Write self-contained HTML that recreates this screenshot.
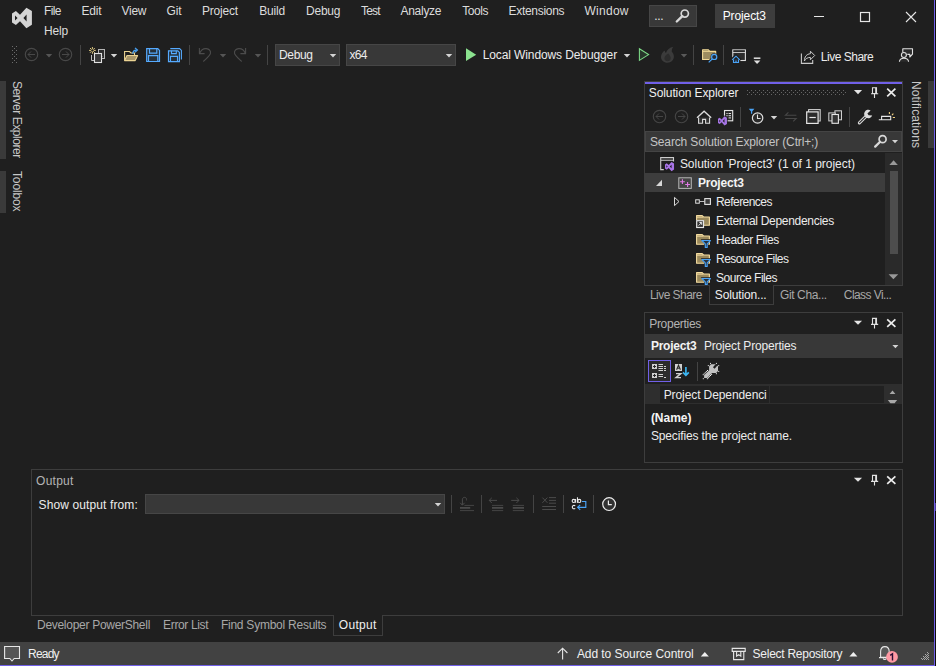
<!DOCTYPE html>
<html><head><meta charset="utf-8"><title>Project3</title>
<style>
html,body{margin:0;padding:0;}
body{width:936px;height:666px;background:#1f1f1f;position:relative;overflow:hidden;font-family:"Liberation Sans", sans-serif;font-size:12px;color:#ececec;}
.r{position:absolute;box-sizing:border-box;}
.t{position:absolute;white-space:pre;line-height:14px;height:14px;}
.v{position:absolute;white-space:pre;line-height:14px;height:14px;transform-origin:0 0;transform:rotate(90deg);}
svg{position:absolute;overflow:visible;}
</style></head><body>
<div class="r" style="left:934px;top:0px;width:1px;height:666px;background:#7160e8;"></div>
<div class="r" style="left:935px;top:0px;width:1px;height:666px;background:#0c0c0c;"></div>
<div class="r" style="left:935px;top:503px;width:1px;height:8px;background:#4b3d94;"></div>
<div class="r" style="left:0px;top:642px;width:934px;height:23px;background:#424242;"></div>
<div class="r" style="left:0px;top:665px;width:935px;height:1px;background:#7160e8;"></div>
<div class="r" style="left:0px;top:81px;width:6px;height:78px;background:#3a3a3a;"></div>
<div class="r" style="left:0px;top:171px;width:6px;height:42px;background:#3a3a3a;"></div>
<div class="r" style="left:928px;top:81px;width:6px;height:67px;background:#3a3a3a;"></div>
<div class="r" style="left:649px;top:5px;width:48px;height:22px;background:#383838;border:1px solid #464646;"></div>
<div class="r" style="left:715px;top:4px;width:60px;height:24px;background:#3d3d3d;"></div>
<div class="r" style="left:275px;top:44px;width:65px;height:22px;background:#383838;border:1px solid #464646;"></div>
<div class="r" style="left:346px;top:44px;width:110px;height:22px;background:#383838;border:1px solid #464646;"></div>
<div class="r" style="left:80px;top:45px;width:1px;height:20px;background:#444;"></div>
<div class="r" style="left:189px;top:45px;width:1px;height:20px;background:#444;"></div>
<div class="r" style="left:267px;top:45px;width:1px;height:20px;background:#444;"></div>
<div class="r" style="left:693px;top:45px;width:1px;height:20px;background:#444;"></div>
<div class="r" style="left:723px;top:45px;width:1px;height:20px;background:#444;"></div>
<div class="r" style="left:644px;top:81px;width:259px;height:205px;background:#1f1f1f;border:1px solid #3d3d3d;"></div>
<div class="r" style="left:645px;top:82px;width:257px;height:2px;background:#7160e8;"></div>
<div class="r" style="left:645px;top:131px;width:257px;height:21px;background:#383838;border:1px solid #444;"></div>
<div class="r" style="left:645px;top:173px;width:240px;height:19px;background:#3d3d3d;"></div>
<div class="r" style="left:885px;top:153px;width:17px;height:132px;background:#2a2a2a;"></div>
<div class="r" style="left:890px;top:171px;width:8px;height:83px;background:#4d4d4d;"></div>
<div class="r" style="left:740px;top:107px;width:1px;height:20px;background:#444;"></div>
<div class="r" style="left:849px;top:107px;width:1px;height:20px;background:#444;"></div>
<div class="r" style="left:709px;top:285px;width:65px;height:20px;background:#1f1f1f;border:1px solid #3d3d3d;border-top:none;"></div>
<div class="r" style="left:644px;top:312px;width:259px;height:151px;background:#1f1f1f;border:1px solid #3d3d3d;"></div>
<div class="r" style="left:645px;top:334px;width:257px;height:24px;background:#383838;"></div>
<div class="r" style="left:648px;top:360px;width:23px;height:22px;background:#2b2b2b;border:1px solid #7160e8;"></div>
<div class="r" style="left:697px;top:362px;width:1px;height:19px;background:#444;"></div>
<div class="r" style="left:645px;top:384px;width:257px;height:20px;background:#2e2e2e;"></div>
<div class="r" style="left:660px;top:386px;width:109px;height:17px;background:#212121;"></div>
<div class="r" style="left:770px;top:386px;width:114px;height:17px;background:#212121;"></div>
<div class="r" style="left:31px;top:469px;width:872px;height:147px;background:#1f1f1f;border:1px solid #3d3d3d;"></div>
<div class="r" style="left:145px;top:494px;width:300px;height:20px;background:#383838;border:1px solid #464646;"></div>
<div class="r" style="left:451px;top:495px;width:1px;height:18px;background:#444;"></div>
<div class="r" style="left:481px;top:495px;width:1px;height:18px;background:#444;"></div>
<div class="r" style="left:533px;top:495px;width:1px;height:18px;background:#444;"></div>
<div class="r" style="left:563px;top:495px;width:1px;height:18px;background:#444;"></div>
<div class="r" style="left:593px;top:495px;width:1px;height:18px;background:#444;"></div>
<div class="r" style="left:333px;top:615px;width:50px;height:21px;background:#1f1f1f;border:1px solid #3d3d3d;border-top:none;"></div>
<svg width="936" height="666" viewBox="0 0 936 666" style="left:0;top:0" fill="none" stroke-linecap="butt"><defs><pattern id="grip" x="12" y="46" width="4" height="4" patternUnits="userSpaceOnUse"><rect x="0" y="0" width="1" height="1" fill="#6c6c6c"/><rect x="2" y="2" width="1" height="1" fill="#6c6c6c"/></pattern><pattern id="dots" x="747" y="90" width="4" height="4" patternUnits="userSpaceOnUse"><rect x="0" y="0" width="1" height="1" fill="#666"/><rect x="2" y="2" width="1" height="1" fill="#666"/></pattern></defs><path fill="#d4d4d4" fill-rule="evenodd" d="M26.4,7.8 L31.9,11.1 L31.9,24.7 L26.4,28.2 L20,21.2 L15.9,24.9 L12,22.5 L12,13.5 L15.9,11 L20,14.8 Z M15,15.6 L17.6,18 L15,20.4 Z M26.6,14.6 L26.6,21.4 L23.4,18 Z"/><circle cx="684.8" cy="13.6" r="3.6" stroke="#d8d8d8" stroke-width="1.7"/><path d="M682.3,16.2 L676.8,21.5" stroke="#d8d8d8" stroke-width="2.4" stroke-linecap="round"/><path d="M814,16.5 H824" stroke="#e6e6e6" stroke-width="1"/><rect x="860.5" y="12.5" width="9" height="9" stroke="#e6e6e6" stroke-width="1.2"/><path d="M906,12 L916,22 M916,12 L906,22" stroke="#e6e6e6" stroke-width="1.1"/><rect x="12" y="46" width="6" height="18" fill="url(#grip)"/><circle cx="31.5" cy="54.5" r="6.2" stroke="#484848" stroke-width="1.15"/><path d="M35.0,54.5 H28.0 M31.0,51.5 L28.0,54.5 L31.0,57.5" stroke="#484848" stroke-width="1"/><circle cx="65.5" cy="54.5" r="6.2" stroke="#484848" stroke-width="1.15"/><path d="M62.0,54.5 H69.0 M66.0,51.5 L69.0,54.5 L66.0,57.5" stroke="#484848" stroke-width="1"/><path d="M45.8,54 H52.2 L49,57.4 Z" fill="#555"/><path d="M110.8,54 H117.2 L114,57.4 Z" fill="#d4d4d4"/><path d="M219.8,54 H226.2 L223,57.4 Z" fill="#555"/><path d="M254.8,54 H261.2 L258,57.4 Z" fill="#555"/><path d="M329.8,54 H336.2 L333,57.4 Z" fill="#d4d4d4"/><path d="M445.8,54 H452.2 L449,57.4 Z" fill="#d4d4d4"/><path d="M623.8,54 H630.2 L627,57.4 Z" fill="#d4d4d4"/><path d="M680.8,54 H687.2 L684,57.4 Z" fill="#5a5a5a"/><path d="M91.5,55 V60.5 H94" stroke="#bdbdbd" stroke-width="1"/><rect x="98.5" y="49.5" width="6" height="9" fill="#2b2b2b" stroke="#b4b4b4" stroke-width="1"/><path d="M100.5,53 V56.5 H103" stroke="#555" stroke-width="1"/><rect x="94.5" y="53.5" width="7" height="9" fill="#3a3a3a" stroke="#e0e0e0" stroke-width="1.1"/><path d="M92.4,47 V53.8 M89,50.4 H95.8 M90,48 L94.8,52.8 M94.8,48 L90,52.8" stroke="#f0d88a" stroke-width="0.9"/><circle cx="92.4" cy="50.4" r="1.2" fill="#1f1f1f"/><path d="M124.6,60.5 V51.5 H129.5 L131,53 H134.5 V55.5" stroke="#ecd493" stroke-width="1.1"/><path d="M124.6,60.6 L127,55.5 H137.6 L135.2,60.6 Z" fill="#a8966a" stroke="#ecd493" stroke-width="1.1" stroke-linejoin="round"/><path d="M132.8,53.8 C132.8,51.3 134.2,50.1 136.6,50.1" stroke="#4aa3f5" stroke-width="1.25"/><path d="M135,47.9 L137.4,50.1 L135,52.3" stroke="#4aa3f5" stroke-width="1.25"/><path d="M146.7,48.7 H157.8 L159.5,50.4 V61.5 H146.7 Z" fill="#26303a" stroke="#55aaff" stroke-width="1.2"/><path d="M149.5,48.7 V53.2 H156.8 V48.7 M148.5,61.5 V55.7 H157.8 V61.5" stroke="#55aaff" stroke-width="1.2"/><path d="M170.3,48.6 H179.6 L181.4,50.4 V59.5" stroke="#55aaff" stroke-width="1.1"/><path d="M168.5,50.8 H177.8 L179.4,52.4 V61.6 H168.5 Z" fill="#26303a" stroke="#55aaff" stroke-width="1.2"/><path d="M171.5,50.8 V53.6 H176.3 V50.8 M170.5,61.6 V56.4 H177.5 V61.6" stroke="#55aaff" stroke-width="1.1"/><path d="M199.4,48 V53.6 H204.6 M199.6,53.4 C201,50 203.5,48.4 206.3,48.6 C209.2,48.8 211,51 210.4,53.6 C210,55.2 208.5,56.5 203.3,61.5" stroke="#4c4c4c" stroke-width="1.1"/><path d="M245.6,48 V53.6 H240.4 M245.4,53.4 C244,50 241.5,48.4 238.7,48.6 C235.8,48.8 234,51 234.6,53.6 C235,55.2 236.5,56.5 241.7,61.5" stroke="#4c4c4c" stroke-width="1.1"/><path d="M466,48.3 L476.2,54.7 L466,61.1 Z" fill="#8be28f"/><path d="M639.4,48.8 L648.6,54.6 L639.4,60.4 Z" fill="#27372a" stroke="#7edb88" stroke-width="1.05"/><path d="M673.4,46.8 C669.6,47.4 666.8,49.8 666,53 C665.2,52.4 664.8,51.4 664.8,50.4 C662.4,52 661,54.4 661,57 C661,60.2 663.8,62.8 667.4,62.8 C671,62.8 673.9,60.2 673.9,56.6 C673.9,54.6 673,53 671.8,51.8 C671.6,50 672.2,48.2 673.4,46.8 Z" fill="#3b3b3b"/><path d="M668.6,53.6 C666.2,54.6 664.4,56.2 664.4,58.2 C664.4,59.9 665.8,61.2 667.5,61.2 C669.3,61.2 670.7,59.9 670.7,58.2 C670.7,56.8 669.6,55.6 668.6,53.6 Z" fill="#2c2c2c"/><path d="M702.6,59.5 V49.7 H708.2 L709.8,51.4 H715.7 V59.5 Z" fill="#9c8c60" stroke="#f2da98" stroke-width="1.1" stroke-linejoin="round"/><path d="M702.6,51.4 H709.6" stroke="#f2da98" stroke-width="0.9"/><circle cx="714.2" cy="56.9" r="3.6" fill="#1f1f1f"/><path d="M712,59.2 L708.6,62.5" stroke="#1f1f1f" stroke-width="3"/><circle cx="714.2" cy="56.9" r="2.6" fill="#252c36" stroke="#4aa3f5" stroke-width="1.2"/><path d="M712.3,58.9 L708.7,62.4" stroke="#4aa3f5" stroke-width="1.3"/><rect x="732.8" y="49.9" width="12.6" height="10.6" fill="#2d2d2d" stroke="#dcdcdc" stroke-width="1.1"/><path d="M732.8,52.3 H745.4" stroke="#dcdcdc" stroke-width="1.1"/><rect x="733.4" y="50.4" width="11.4" height="1.4" fill="#1f1f1f"/><path d="M731.4,60.2 L736,55.8 L740.6,60.2 M733.3,59 V62.8 H738.7 V59" fill="#1f1f1f" stroke="#1f1f1f" stroke-width="3"/><path d="M733.5,59.6 V62.5 H738.5 V59.6" fill="#252c36" stroke="#4aa3f5" stroke-width="1.1"/><path d="M732.2,59.8 L736,56.2 L739.8,59.8" stroke="#4aa3f5" stroke-width="1.15"/><rect x="735.4" y="60.6" width="1.2" height="1.6" fill="#4aa3f5"/><path d="M753.8,58.2 H760.4" stroke="#e0e0e0" stroke-width="1.5"/><path d="M753.8,60.6 H760.4 L757.1,64 Z" fill="#e0e0e0"/><path d="M801.4,53.6 V63.4 H812.7 V60" stroke="#c8c8c8" stroke-width="1.1"/><path d="M804.4,61 C804.4,56.8 806.6,54 810.4,53.7 V51.2 L814.7,55.5 L810.4,59.8 V57.4 C807.6,57.4 805.6,58.6 804.4,61 Z" stroke="#c8c8c8" stroke-width="1" stroke-linejoin="round"/><path d="M902.8,52.4 V48.8 H912.5 V54.2 L909.8,57 V54.4 H907.3" fill="#2b2b2b" stroke="#e0e0e0" stroke-width="1.1" stroke-linejoin="round"/><circle cx="903.9" cy="55" r="2.5" fill="#2b2b2b" stroke="#e0e0e0" stroke-width="1.1"/><path d="M899.4,61.8 C899.6,59.4 901.4,58.2 903.9,58.2 C906.4,58.2 908.4,59.4 908.6,61.8" fill="#2b2b2b" stroke="#e0e0e0" stroke-width="1.1"/><rect x="747" y="90" width="100" height="6" fill="url(#dots)"/><path d="M853.9,90.10000000000001 H862.1 L858,94.2 Z" fill="#e4e4e4"/><path d="M872.5,87.80000000000001 H876.5 V93.60000000000001 H872.5 Z M871,93.80000000000001 H878.2 M874.5,93.80000000000001 V98.0" stroke="#e0e0e0" stroke-width="1.1"/><path d="M876,87.80000000000001 V93.60000000000001" stroke="#e0e0e0" stroke-width="1.6"/><path d="M887.2,88.7 L895.4,96.30000000000001 M895.4,88.7 L887.2,96.30000000000001" stroke="#ececec" stroke-width="1.7"/><path d="M853.9,320.7 H862.1 L858,324.8 Z" fill="#e4e4e4"/><path d="M872.5,318.4 H876.5 V324.2 H872.5 Z M871,324.4 H878.2 M874.5,324.4 V328.6" stroke="#e0e0e0" stroke-width="1.1"/><path d="M876,318.4 V324.2" stroke="#e0e0e0" stroke-width="1.6"/><path d="M887.2,319.3 L895.4,326.9 M895.4,319.3 L887.2,326.9" stroke="#ececec" stroke-width="1.7"/><path d="M853.9,477.7 H862.1 L858,481.8 Z" fill="#e4e4e4"/><path d="M872.5,475.4 H876.5 V481.2 H872.5 Z M871,481.4 H878.2 M874.5,481.4 V485.6" stroke="#e0e0e0" stroke-width="1.1"/><path d="M876,475.4 V481.2" stroke="#e0e0e0" stroke-width="1.6"/><path d="M887.2,476.3 L895.4,483.9 M895.4,476.3 L887.2,483.9" stroke="#ececec" stroke-width="1.7"/><circle cx="659.5" cy="116.5" r="6.2" stroke="#454545" stroke-width="1.15"/><path d="M663.0,116.5 H656.0 M659.0,113.5 L656.0,116.5 L659.0,119.5" stroke="#454545" stroke-width="1"/><circle cx="681.5" cy="116.5" r="6.2" stroke="#454545" stroke-width="1.15"/><path d="M678.0,116.5 H685.0 M682.0,113.5 L685.0,116.5 L682.0,119.5" stroke="#454545" stroke-width="1"/><path d="M698.6,117.4 V123.2 H702.6 V119.4 H705.6 V123.2 H709.6 V117.4" fill="#333" stroke="#dcdcdc" stroke-width="1.1"/><path d="M697,117.8 L704.1,111.2 L711.2,117.8" stroke="#dcdcdc" stroke-width="1.3"/><rect x="724.5" y="110.5" width="8.2" height="10.3" fill="#2b2b2b" stroke="#e4e4e4" stroke-width="1.1"/><path d="M726.4,113.5 H727.6 M728.6,113.5 H731 M726.4,115.7 H727.6 M728.6,115.7 H731 M728.6,117.9 H731" stroke="#e4e4e4" stroke-width="1"/><g transform="translate(718,116.3) scale(0.45) translate(-12,-7.8)"><path fill="#1f1f1f" stroke="#1f1f1f" stroke-width="3" d="M26.4,7.8 L31.9,11.1 L31.9,24.7 L26.4,28.2 L20,21.2 L15.9,24.9 L12,22.5 L12,13.5 L15.9,11 L20,14.8 Z"/><path fill="#a574e4" fill-rule="evenodd" d="M26.4,7.8 L31.9,11.1 L31.9,24.7 L26.4,28.2 L20,21.2 L15.9,24.9 L12,22.5 L12,13.5 L15.9,11 L20,14.8 Z M15,15.2 L17.9,18 L15,20.8 Z M26.4,14 L26.4,22 L22.6,18 Z"/></g><path d="M748.8,108.8 H754.4 L752.2,111.4 V113.8 H751 V111.4 Z" fill="#4aa3f5"/><circle cx="757.6" cy="118" r="5.2" fill="#2b2b2b" stroke="#e0e0e0" stroke-width="1.2"/><path d="M757.5,114.6 V118.5 H760.6" stroke="#e0e0e0" stroke-width="1.1"/><path d="M770.8,116 H777.2 L774,119.4 Z" fill="#d4d4d4"/><path d="M796.4,115.3 H785.4 L788.4,112.4 M785.2,118.5 H796.2 L793.2,121.4" stroke="#474747" stroke-width="1.1"/><rect x="808.6" y="109.6" width="11.6" height="11.4" fill="#2b2b2b" stroke="#d8d8d8" stroke-width="1"/><rect x="806.7" y="111.9" width="11.4" height="11.5" fill="#2b2b2b" stroke="#e6e6e6" stroke-width="1.2"/><path d="M809.4,117.5 H815.8" stroke="#e6e6e6" stroke-width="1.2"/><rect x="834.9" y="110.8" width="6.6" height="9" fill="#2b2b2b" stroke="#cfcfcf" stroke-width="1"/><rect x="828.8" y="112.9" width="6.4" height="8" fill="#2b2b2b" stroke="#cfcfcf" stroke-width="1"/><rect x="832" y="114.5" width="6.4" height="8.8" fill="#333" stroke="#e6e6e6" stroke-width="1.1"/><path d="M866.2,116.2 L859.4,122.8" stroke="#dcdcdc" stroke-width="3.2" stroke-linecap="round"/><path d="M866,116.4 L859.6,122.6" stroke="#2b2b2b" stroke-width="1.2" stroke-linecap="round"/><path d="M870.6,110.4 A4.2,4.2 0 1 0 872.2,115.6 L868.6,115.2 L867.4,113.4 Z" fill="#dcdcdc"/><path d="M878.8,119.8 H890.7 V116.4 H881.6 V119.8" stroke="#e6e6e6" stroke-width="1.1"/><path d="M889.4,112 V114 M892,115 L893.4,113.6 M892.8,117.5 H895" stroke="#f0d080" stroke-width="1.1"/><circle cx="882.6" cy="139.2" r="3.5" stroke="#d8d8d8" stroke-width="1.7"/><path d="M880.1,141.7 L875.2,146.6" stroke="#d8d8d8" stroke-width="2.3" stroke-linecap="round"/><path d="M892.0,140 H898.0 L895,143.2 Z" fill="#d4d4d4"/><path d="M889.4,165 H897.8 L893.6,160.2 Z" fill="#999"/><path d="M888.6,274.2 H898.2 L893.4,279.2 Z" fill="#999"/><path d="M663.8,169.6 H660.7 V157.6 H673.5 V161.6 M660.7,160.3 H673.5" stroke="#cdcdcd" stroke-width="1.1"/><g transform="translate(665,161.9) scale(0.455) translate(-12,-7.8)"><path fill="#1f1f1f" stroke="#1f1f1f" stroke-width="3" d="M26.4,7.8 L31.9,11.1 L31.9,24.7 L26.4,28.2 L20,21.2 L15.9,24.9 L12,22.5 L12,13.5 L15.9,11 L20,14.8 Z"/><path fill="#a874e6" fill-rule="evenodd" d="M26.4,7.8 L31.9,11.1 L31.9,24.7 L26.4,28.2 L20,21.2 L15.9,24.9 L12,22.5 L12,13.5 L15.9,11 L20,14.8 Z M15,15.2 L17.9,18 L15,20.8 Z M26.4,14 L26.4,22 L22.6,18 Z"/></g><path d="M662,179.8 V186 H656 Z" fill="#d8d8d8"/><rect x="678.8" y="177.8" width="12.5" height="10.6" fill="#454545" stroke="#b8b8b8" stroke-width="1"/><path d="M682.4,179.3 V184.1 M680,181.7 H684.8 M687.6,182.1 V186.9 M685.2,184.5 H690" stroke="#e27ae6" stroke-width="1.1"/><path d="M674.5,197.4 V205.6 L679,201.5 Z" stroke="#d8d8d8" stroke-width="1"/><rect x="695.7" y="199.8" width="3.6" height="3.4" stroke="#e0e0e0" stroke-width="1"/><path d="M699.4,201.5 H704.6" stroke="#bdbdbd" stroke-width="1"/><rect x="704.8" y="198.6" width="5.6" height="5.8" fill="#3c3c3c" stroke="#e6e6e6" stroke-width="1.1"/><path d="M696.6,225.3 V215.6 H702.2 L703.6,217 H709.4 V225.3 Z" fill="#9a895c" stroke="#f5dda0" stroke-width="1.1" stroke-linejoin="round"/><path d="M696.6,217.2 H703" stroke="#f5dda0" stroke-width="0.9"/><rect x="696" y="220" width="8" height="8" fill="#1f1f1f"/><rect x="696.7" y="220.7" width="6.8" height="6.8" fill="#333" stroke="#e6e6e6" stroke-width="1.2"/><path d="M698.6,225.6 L701.6,222.6 M699.4,222.5 H701.7 V224.8" stroke="#e6e6e6" stroke-width="1"/><path d="M696.6,244.3 V234.6 H702.2 L703.6,236 H709.4 V244.3 Z" fill="#9a895c" stroke="#f5dda0" stroke-width="1.1" stroke-linejoin="round"/><path d="M696.6,236.2 H703" stroke="#f5dda0" stroke-width="0.9"/><path d="M700.7,239.2 H711.5 L708.3,243.4 V248.20000000000002 H704.3 V243.4 Z" fill="#1f1f1f"/><path d="M701.9,240.5 H710.5 L707.2,243.8 V247.4 H705.3 V243.8 Z" fill="#26313d" stroke="#4aa3f5" stroke-width="1.1" stroke-linejoin="round"/><path d="M696.6,263.3 V253.6 H702.2 L703.6,255 H709.4 V263.3 Z" fill="#9a895c" stroke="#f5dda0" stroke-width="1.1" stroke-linejoin="round"/><path d="M696.6,255.2 H703" stroke="#f5dda0" stroke-width="0.9"/><path d="M700.7,258.2 H711.5 L708.3,262.4 V267.2 H704.3 V262.4 Z" fill="#1f1f1f"/><path d="M701.9,259.5 H710.5 L707.2,262.8 V266.4 H705.3 V262.8 Z" fill="#26313d" stroke="#4aa3f5" stroke-width="1.1" stroke-linejoin="round"/><path d="M696.6,282.3 V272.6 H702.2 L703.6,274 H709.4 V282.3 Z" fill="#9a895c" stroke="#f5dda0" stroke-width="1.1" stroke-linejoin="round"/><path d="M696.6,274.2 H703" stroke="#f5dda0" stroke-width="0.9"/><path d="M700.7,277.2 H711.5 L708.3,281.4 V285.2 H704.3 V281.4 Z" fill="#1f1f1f"/><path d="M701.9,278.5 H710.5 L707.2,281.8 V284.4 H705.3 V281.8 Z" fill="#26313d" stroke="#4aa3f5" stroke-width="1.1" stroke-linejoin="round"/><rect x="652" y="364" width="5" height="5" fill="#d0d0d0"/><path d="M653,366.5 H656 M654.5,365 V368" stroke="#2b2b2b" stroke-width="1"/><rect x="652" y="373" width="5" height="5" fill="#d0d0d0"/><path d="M653,375.5 H656 M654.5,374 V377" stroke="#2b2b2b" stroke-width="1"/><path d="M658.5,364.5 H663 M658.5,366.5 H663 M658.5,368.5 H663 M658.5,370.5 H663 M664,366.5 H666 M664,368.5 H666 M664,370.5 H666 M658.5,374.5 H663 M658.5,376.5 H663 M664,377.5 H666" stroke="#d0d0d0" stroke-width="1"/><rect x="675" y="364" width="7" height="7" fill="#d0d0d0"/><path d="M676.6,369.8 L678.5,365.2 L680.4,369.8 M677.3,368.3 H679.7" stroke="#2b2b2b" stroke-width="1.1"/><path d="M676,373.6 H680.8 L676,377.6 H681" stroke="#d0d0d0" stroke-width="1.4"/><path d="M685.9,367 V375 M683,372.4 L685.9,375.4 L688.8,372.4" stroke="#3cb8f5" stroke-width="1.6"/><path d="M711,364.3 H716.1 L718,366.2 V371 L716.1,372.9 H712 L707,378 H704.1 V375.2 L709.1,370.2 V366.2 Z" fill="#c2c2c2"/><path d="M717,364.2 L713.8,368" stroke="#1f1f1f" stroke-width="2.2"/><rect x="710.0" y="362.9" width="1" height="1" fill="#f4f4f4"/><rect x="707.8" y="365.1" width="1" height="1" fill="#f4f4f4"/><rect x="715.9" y="362.9" width="1" height="1" fill="#f4f4f4"/><rect x="718.2" y="365.2" width="1" height="1" fill="#f4f4f4"/><rect x="718.2" y="370.9" width="1" height="1" fill="#f4f4f4"/><rect x="715.9" y="373.2" width="1" height="1" fill="#f4f4f4"/><rect x="707.0" y="370.0" width="1" height="1" fill="#f4f4f4"/><rect x="705.9" y="371.1" width="1" height="1" fill="#f4f4f4"/><rect x="704.8" y="372.2" width="1" height="1" fill="#f4f4f4"/><rect x="703.7" y="373.3" width="1" height="1" fill="#f4f4f4"/><rect x="702.7" y="374.2" width="1" height="1" fill="#f4f4f4"/><rect x="711.1" y="373.9" width="1" height="1" fill="#f4f4f4"/><rect x="710.0" y="375.0" width="1" height="1" fill="#f4f4f4"/><rect x="708.9" y="376.1" width="1" height="1" fill="#f4f4f4"/><rect x="707.9" y="377.2" width="1" height="1" fill="#f4f4f4"/><rect x="706.9" y="378.2" width="1" height="1" fill="#f4f4f4"/><rect x="702.8" y="378.2" width="1" height="1" fill="#f4f4f4"/><path d="M892.4,345 H898.4 L895.4,348.2 Z" fill="#d4d4d4"/><path d="M889.6,394 H895.4 L892.5,390.6 Z" fill="#a8a8a8"/><path d="M887.8,400 H897.2 L894.6,403.2 H890.4 Z" fill="#a8a8a8"/><path d="M434.8,503 H441.2 L438,506.4 Z" fill="#d4d4d4"/><path d="M462.4,499.4 V505 M460.2,502.8 L462.4,505.2 L464.6,502.8 M462.4,499.6 C462.4,496.6 466.6,496.6 466.6,499.6 V500.4" stroke="#4a4a4a" stroke-width="1"/><path d="M464.4,505.4 H474 M460,510.6 H474" stroke="#444" stroke-width="1"/><path d="M460,507.9 H470.2" stroke="#4a4a4a" stroke-width="1.8"/><path d="M489.2,500.4 H497 M491.8,497.8 L489.2,500.4 L491.8,503" stroke="#4a4a4a" stroke-width="1"/><path d="M492,505.4 H503.2 M492,510.6 H503.2" stroke="#444" stroke-width="1"/><path d="M492,507.9 H503.2" stroke="#4a4a4a" stroke-width="1.8"/><path d="M511.2,500.4 H519 M516.4,497.8 L519,500.4 L516.4,503" stroke="#4a4a4a" stroke-width="1"/><path d="M512.8,505.4 H524 M512.8,510.6 H524" stroke="#444" stroke-width="1"/><path d="M512.8,507.9 H524" stroke="#4a4a4a" stroke-width="1.8"/><path d="M549,497.6 H556 M549,500.4 H556 M549,503.2 H556 M542.2,506.5 H556 M542.2,509.5 H556 M542.4,497.6 L547.4,502.8 M547.4,497.6 L542.4,502.8" stroke="#4a4a4a" stroke-width="1"/><path d="M582,501.5 H585.8 V507.3 H577.8 M580.2,504.8 L577.6,507.3 L580.2,509.8" stroke="#4aa3f5" stroke-width="1.15"/><circle cx="573.7" cy="500.9" r="1.55" stroke="#ececec" stroke-width="1.1"/><path d="M575.6,499 V502.8" stroke="#ececec" stroke-width="1.1"/><circle cx="579.3" cy="500.9" r="1.55" stroke="#ececec" stroke-width="1.1"/><path d="M577.5,497.3 V502.8" stroke="#ececec" stroke-width="1.1"/><path d="M575.2,505.9 A1.7,1.7 0 1 0 575.2,508.3" stroke="#ececec" stroke-width="1.1"/><circle cx="609.1" cy="504.1" r="6.4" fill="#313131" stroke="#ececec" stroke-width="1.2"/><path d="M608.4,500.4 V504.7 H611.8" stroke="#ececec" stroke-width="1.2"/><path d="M4.6,646.5 H19.5 V658.5 H14.2 L12,661 L9.8,658.5 H4.6 Z" fill="#555" stroke="#e6e6e6" stroke-width="1.1"/><path d="M562.6,659.4 V648.4 M557.8,653 L562.6,648.2 L567.4,653" stroke="#e6e6e6" stroke-width="1.1"/><path d="M700.8,656.4 H708.8 L704.8,652 Z" fill="#f0f0f0"/><path d="M849.4,656.4 H857.4 L853.4,652 Z" fill="#f0f0f0"/><path d="M732.2,648.4 H745.2 V651.4 H732.2 Z M733.6,651.6 V659.6 H743.8 V651.6 M736.6,651.6 V656.2 L738.7,654.6 L740.8,656.2 V651.6" stroke="#e6e6e6" stroke-width="1.1"/><path d="M879,657.6 H890.6 M880.6,657.4 V651.8 C880.6,648.4 882.4,646.6 884.9,646.6 C887.4,646.6 889.2,648.4 889.2,651.8 V657.4 Z" fill="#585858" stroke="#e8e8e8" stroke-width="1.1" stroke-linejoin="round"/><path d="M883.2,658.4 C883.6,659.9 886,659.9 886.4,658.4" stroke="#e8e8e8" stroke-width="1.1"/><circle cx="892" cy="656.9" r="5.9" fill="#ff99a4"/><path d="M890.2,655.4 L892.5,653.8 V660.5" stroke="#2a0c34" stroke-width="1.4"/><rect x="927" y="652" width="1" height="1" fill="#a6a6a6"/><rect x="928" y="653" width="1" height="1" fill="#a6a6a6"/><rect x="925" y="654" width="1" height="1" fill="#a6a6a6"/><rect x="927" y="654" width="1" height="1" fill="#a6a6a6"/><rect x="926" y="655" width="1" height="1" fill="#a6a6a6"/><rect x="928" y="655" width="1" height="1" fill="#a6a6a6"/><rect x="923" y="656" width="1" height="1" fill="#a6a6a6"/><rect x="925" y="656" width="1" height="1" fill="#a6a6a6"/><rect x="927" y="656" width="1" height="1" fill="#a6a6a6"/><rect x="924" y="657" width="1" height="1" fill="#a6a6a6"/><rect x="926" y="657" width="1" height="1" fill="#a6a6a6"/><rect x="928" y="657" width="1" height="1" fill="#a6a6a6"/><rect x="921" y="658" width="1" height="1" fill="#a6a6a6"/><rect x="923" y="658" width="1" height="1" fill="#a6a6a6"/><rect x="925" y="658" width="1" height="1" fill="#a6a6a6"/><rect x="927" y="658" width="1" height="1" fill="#a6a6a6"/><rect x="922" y="659" width="1" height="1" fill="#a6a6a6"/><rect x="924" y="659" width="1" height="1" fill="#a6a6a6"/><rect x="926" y="659" width="1" height="1" fill="#a6a6a6"/><rect x="928" y="659" width="1" height="1" fill="#a6a6a6"/></svg>
<span class="t" style="left:44.0px;top:4px;color:#dcdcdc;letter-spacing:-0.615px;">File</span>
<span class="t" style="left:81.5px;top:4px;color:#dcdcdc;letter-spacing:-0.229px;">Edit</span>
<span class="t" style="left:121.5px;top:4px;color:#dcdcdc;letter-spacing:-0.266px;">View</span>
<span class="t" style="left:166.5px;top:4px;color:#dcdcdc;letter-spacing:-0.172px;">Git</span>
<span class="t" style="left:202.0px;top:4px;color:#dcdcdc;letter-spacing:-0.193px;">Project</span>
<span class="t" style="left:259.2px;top:4px;color:#dcdcdc;letter-spacing:-0.172px;">Build</span>
<span class="t" style="left:306.0px;top:4px;color:#dcdcdc;letter-spacing:-0.219px;">Debug</span>
<span class="t" style="left:361.0px;top:4px;color:#dcdcdc;letter-spacing:-0.800px;">Test</span>
<span class="t" style="left:400.5px;top:4px;color:#dcdcdc;letter-spacing:-0.284px;">Analyze</span>
<span class="t" style="left:462.2px;top:4px;color:#dcdcdc;letter-spacing:-0.441px;">Tools</span>
<span class="t" style="left:508.5px;top:4px;color:#dcdcdc;letter-spacing:-0.300px;">Extensions</span>
<span class="t" style="left:584.5px;top:4px;color:#dcdcdc;letter-spacing:0.263px;">Window</span>
<span class="t" style="left:44.0px;top:24px;color:#dcdcdc;letter-spacing:-0.162px;">Help</span>
<span class="t" style="left:654.2px;top:9px;color:#e8e8e8;letter-spacing:-0.250px;">...</span>
<span class="t" style="left:722.7px;top:9px;color:#ffffff;letter-spacing:-0.104px;">Project3</span>
<span class="t" style="left:279.0px;top:48px;color:#ececec;letter-spacing:-0.344px;">Debug</span>
<span class="t" style="left:349.5px;top:48px;color:#ececec;letter-spacing:-0.680px;">x64</span>
<span class="t" style="left:482.7px;top:48px;color:#ececec;letter-spacing:-0.107px;">Local Windows Debugger</span>
<span class="t" style="left:820.8px;top:50px;color:#ececec;letter-spacing:-0.486px;">Live Share</span>
<span class="t" style="left:648.8px;top:86px;color:#f0f0f0;letter-spacing:-0.106px;">Solution Explorer</span>
<span class="t" style="left:650.0px;top:135px;color:#c4c4c4;letter-spacing:-0.152px;">Search Solution Explorer (Ctrl+;)</span>
<span class="t" style="left:679.9px;top:157px;color:#ececec;letter-spacing:-0.026px;">Solution 'Project3' (1 of 1 project)</span>
<span class="t" style="left:697.9px;top:176px;color:#f4f4f4;letter-spacing:-0.180px;font-weight:bold;">Project3</span>
<span class="t" style="left:716.0px;top:195px;color:#ececec;letter-spacing:-0.553px;">References</span>
<span class="t" style="left:716.0px;top:214px;color:#ececec;letter-spacing:-0.294px;">External Dependencies</span>
<span class="t" style="left:716.0px;top:233px;color:#ececec;letter-spacing:-0.430px;">Header Files</span>
<span class="t" style="left:716.0px;top:252px;color:#ececec;letter-spacing:-0.541px;">Resource Files</span>
<span class="t" style="left:716.0px;top:271px;color:#ececec;letter-spacing:-0.473px;">Source Files</span>
<span class="t" style="left:649.9px;top:288px;color:#a8a8a8;letter-spacing:-0.531px;">Live Share</span>
<span class="t" style="left:714.8px;top:288px;color:#f0f0f0;letter-spacing:-0.147px;">Solution...</span>
<span class="t" style="left:780.0px;top:288px;color:#a8a8a8;letter-spacing:-0.387px;">Git Cha...</span>
<span class="t" style="left:843.8px;top:288px;color:#a8a8a8;letter-spacing:-0.570px;">Class Vi...</span>
<span class="t" style="left:649.2px;top:317px;color:#b4b4b4;letter-spacing:-0.289px;">Properties</span>
<span class="t" style="left:650.9px;top:339px;color:#f4f4f4;letter-spacing:-0.223px;font-weight:bold;">Project3</span>
<span class="t" style="left:703.9px;top:339px;color:#ececec;letter-spacing:-0.157px;">Project Properties</span>
<span class="t" style="left:663.7px;top:388px;color:#ececec;letter-spacing:-0.096px;">Project Dependenci</span>
<span class="t" style="left:650.9px;top:411px;color:#f4f4f4;letter-spacing:-0.017px;font-weight:bold;">(Name)</span>
<span class="t" style="left:650.9px;top:429px;color:#ececec;letter-spacing:-0.137px;">Specifies the project name.</span>
<span class="t" style="left:36.1px;top:474px;color:#b4b4b4;letter-spacing:0.234px;">Output</span>
<span class="t" style="left:38.6px;top:498px;color:#ececec;letter-spacing:0.113px;">Show output from:</span>
<span class="t" style="left:37.0px;top:618px;color:#a8a8a8;letter-spacing:-0.286px;">Developer PowerShell</span>
<span class="t" style="left:163.1px;top:618px;color:#a8a8a8;letter-spacing:-0.354px;">Error List</span>
<span class="t" style="left:220.9px;top:618px;color:#a8a8a8;letter-spacing:-0.241px;">Find Symbol Results</span>
<span class="t" style="left:338.8px;top:618px;color:#f0f0f0;letter-spacing:0.314px;">Output</span>
<span class="t" style="left:28.1px;top:647px;color:#f0f0f0;letter-spacing:-0.800px;">Ready</span>
<span class="t" style="left:576.9px;top:647px;color:#f0f0f0;letter-spacing:-0.059px;">Add to Source Control</span>
<span class="t" style="left:752.6px;top:647px;color:#f0f0f0;letter-spacing:-0.265px;">Select Repository</span>
<span class="v" style="left:24.4px;top:80.7px;color:#c8c8c8;letter-spacing:-0.434px;">Server Explorer</span>
<span class="v" style="left:24.4px;top:170.8px;color:#c8c8c8;letter-spacing:-0.146px;">Toolbox</span>
<span class="v" style="left:923.4px;top:81.1px;color:#c8c8c8;letter-spacing:0.135px;">Notifications</span>
</body></html>
